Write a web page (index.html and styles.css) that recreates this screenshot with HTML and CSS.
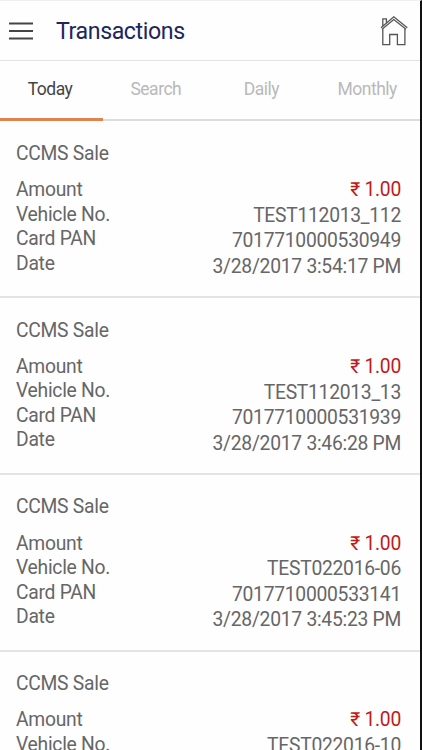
FILE: index.html
```html
<!DOCTYPE html>
<html lang="en">
<head>
<meta charset="utf-8">
<title>Transactions</title>
<link rel="stylesheet" href="styles.css">
</head>
<body>
<div class="screen">
  <header class="bar">
    <svg class="menu" viewBox="0 0 24 18" width="24" height="18"><path d="M0 1.5h24M0 9h24M0 16.5h24"/></svg>
    <h1><span>Transactions</span></h1>
    <svg class="home" viewBox="0 0 30 32" width="30" height="32"><path d="M2.8 13.6v16h6.9V19.5h7.7v10.1h7.5v-16M1 12.8 13.8 1.8 27.3 12.8M2 14.3 13.8 4.6 26 14.3M2.8 11.2V3.8h3.6v4.2"/></svg>
  </header>
  <nav class="tabs">
    <a class="tab active"><span>Today</span></a>
    <a class="tab"><span>Search</span></a>
    <a class="tab"><span>Daily</span></a>
    <a class="tab"><span>Monthly</span></a>
  </nav>
  <main>
    <section class="card">
      <h2><span>CCMS Sale</span></h2>
      <div class="details">
        <div class="labels"><span>Amount</span><span>Vehicle No.</span><span>Card PAN</span><span>Date</span></div>
        <div class="values"><span class="amount">₹ 1.00</span><span>TEST112013_112</span><span>7017710000530949</span><span>3/28/2017 3:54:17 PM</span></div>
      </div>
    </section>
    <section class="card">
      <h2><span>CCMS Sale</span></h2>
      <div class="details">
        <div class="labels"><span>Amount</span><span>Vehicle No.</span><span>Card PAN</span><span>Date</span></div>
        <div class="values"><span class="amount">₹ 1.00</span><span>TEST112013_13</span><span>7017710000531939</span><span>3/28/2017 3:46:28 PM</span></div>
      </div>
    </section>
    <section class="card">
      <h2><span>CCMS Sale</span></h2>
      <div class="details">
        <div class="labels"><span>Amount</span><span>Vehicle No.</span><span>Card PAN</span><span>Date</span></div>
        <div class="values"><span class="amount">₹ 1.00</span><span>TEST022016-06</span><span>7017710000533141</span><span>3/28/2017 3:45:23 PM</span></div>
      </div>
    </section>
    <section class="card">
      <h2><span>CCMS Sale</span></h2>
      <div class="details">
        <div class="labels"><span>Amount</span><span>Vehicle No.</span></div>
        <div class="values"><span class="amount">₹ 1.00</span><span>TEST022016-10</span></div>
      </div>
    </section>
  </main>
</div>
</body>
</html>
```
FILE: styles.css
```css
* { box-sizing: border-box; }
body { margin: 0; background: #fefefe; font-family: Roboto, sans-serif; color: #666; }
.screen { height: 750px; overflow: hidden; border-right: 2px solid #111; border-top: 1px solid #f0f0f0; }
.bar { height: 60px; display: flex; align-items: center; padding: 0 10px 0 9px; border-bottom: 1px solid #e2e2e2; }
.menu { stroke: #444; stroke-width: 2.2; fill: none; }
h1 { margin: 0 auto 0 23px; font-size: 23.2px; letter-spacing: -.42px; font-weight: 400; color: #20265c; line-height: 28px; }
.home { stroke: #555; stroke-width: 1.3; fill: none; }
.tabs { height: 60px; display: flex; border-bottom: 2px solid #dcdcdc; }
.tab { flex: 1; margin-bottom: -2px; padding-bottom: 1px; display: flex; align-items: center; justify-content: center; font-size: 17.5px; letter-spacing: -.5px; color: #b9b9b9; border-bottom: 3px solid transparent; }
.tab.active { flex: none; width: 103px; padding: 0 3px 1px 0; color: #444; border-color: #df8350; }
main { padding-top: .8px; }
.card { height: 176.7px; padding: 20.1px 19px 0 16px; border-bottom: 2px solid #e4e4e4; font-size: 19.3px; letter-spacing: -.27px; }
h2 { margin: 0; font-size: inherit; font-weight: 400; line-height: 24px; }
.details { display: flex; justify-content: space-between; margin-top: 12.4px; }
.labels, .values { display: flex; flex-direction: column; align-items: flex-start; line-height: 24.5px; }
.values { align-items: flex-end; margin-top: -1px; line-height: 25.6px; }
.amount { color: #c11920; }
```
